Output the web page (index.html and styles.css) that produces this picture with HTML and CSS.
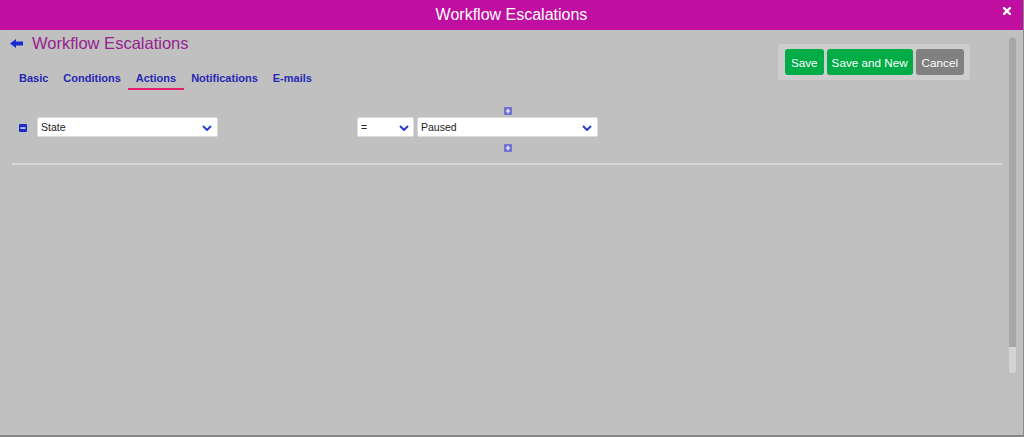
FILE: index.html
```html
<!DOCTYPE html>
<html lang="en">
<head>
<meta charset="utf-8">
<title>Workflow Escalations</title>
<link rel="stylesheet" href="styles.css">
</head>
<body>
<div class="modal">
  <header class="modal-header">
    <h1 class="modal-title">Workflow Escalations</h1>
    <button class="close" aria-label="Close">
      <svg width="8" height="8" viewBox="0 0 8 8"><path d="M1 1L7 7M7 1L1 7" stroke="#fff" stroke-width="2.4" stroke-linecap="square"/></svg>
    </button>
  </header>
  <div class="modal-body">
    <main class="content">
      <div class="top">
        <div class="heading">
          <div class="title-row">
            <svg class="back" width="13" height="9" viewBox="0 0 13 9"><path d="M0 4.5L6 0V2.6H13V6.4H6V9Z" fill="#1b2bd2"/></svg>
            <h2 class="page-title">Workflow Escalations</h2>
          </div>
          <nav class="tabs">
            <a class="tab">Basic</a>
            <a class="tab">Conditions</a>
            <a class="tab active">Actions</a>
            <a class="tab">Notifications</a>
            <a class="tab">E-mails</a>
          </nav>
        </div>
        <div class="actions">
          <button class="btn btn-green">Save</button>
          <button class="btn btn-green btn-wide">Save and New</button>
          <button class="btn btn-gray">Cancel</button>
        </div>
      </div>

      <div class="rule">
        <span class="remove">
          <svg width="8" height="8" viewBox="0 0 8 8"><rect width="8" height="8" rx="1" fill="#1c2cc4"/><rect x="1.5" y="3.4" width="5" height="1.3" fill="#fff"/></svg>
        </span>
        <div class="select field"><span>State</span><svg class="chev" width="10" height="6" viewBox="0 0 10 6"><path d="M1 1L5 5L9 1" fill="none" stroke="#2b3bd1" stroke-width="2"/></svg></div>
        <div class="select op"><span>=</span><svg class="chev" width="10" height="6" viewBox="0 0 10 6"><path d="M1 1L5 5L9 1" fill="none" stroke="#2b3bd1" stroke-width="2"/></svg></div>
        <span class="add add-top">
          <svg width="8" height="8" viewBox="0 0 8 8"><rect width="8" height="8" rx="1" fill="#7070d6"/><path d="M4 1.8V6.2M1.8 4H6.2" stroke="#fff" stroke-width="1.2"/></svg>
        </span>
        <div class="select value"><span>Paused</span><svg class="chev" width="10" height="6" viewBox="0 0 10 6"><path d="M1 1L5 5L9 1" fill="none" stroke="#2b3bd1" stroke-width="2"/></svg></div>
        <span class="add add-bottom">
          <svg width="8" height="8" viewBox="0 0 8 8"><rect width="8" height="8" rx="1" fill="#7070d6"/><path d="M4 1.8V6.2M1.8 4H6.2" stroke="#fff" stroke-width="1.2"/></svg>
        </span>
      </div>

      <hr class="divider">
    </main>
    <div class="scroll-col">
      <div class="scroll-track"><div class="scroll-thumb"></div></div>
    </div>
  </div>
</div>
</body>
</html>
```

FILE: styles.css
```css
* { box-sizing: border-box; }

html, body {
  margin: 0;
  padding: 0;
  background: #c0c0c0;
  font-family: "Liberation Sans", Arial, sans-serif;
}

.modal {
  width: 1024px;
  height: 437px;
  display: flex;
  flex-direction: column;
  background: #c0c0c0;
  border-right: 1px solid #8a8a8a;
  border-bottom: 2px solid #858585;
  overflow: hidden;
}

.modal-header {
  position: relative;
  height: 30px;
  flex: none;
  background: #c00ea1;
  display: flex;
  justify-content: center;
  align-items: center;
}

.modal-title {
  margin: 0;
  font-size: 16px;
  font-weight: normal;
  line-height: 30px;
  color: #fff;
}

.close {
  position: absolute;
  top: 7px;
  right: 12px;
  padding: 0;
  border: 0;
  background: none;
  width: 8px;
  height: 8px;
  display: flex;
}

.modal-body {
  flex: 1;
  display: flex;
  min-height: 0;
}

.content {
  flex: 1;
  padding-left: 10px;
  padding-right: 1px;
}

.top {
  display: flex;
  justify-content: space-between;
  align-items: flex-start;
}

.title-row {
  margin-top: 2px;
  height: 22px;
  display: flex;
  align-items: center;
  gap: 9px;
}

.back { flex: none; margin-top: 1px; }

.page-title {
  margin: 0;
  font-size: 16.5px;
  font-weight: normal;
  line-height: 22px;
  color: #97208f;
}

.tabs {
  display: flex;
  margin-top: 17px;
  margin-left: 1.5px;
}

.tab {
  font-size: 11px;
  font-weight: bold;
  line-height: 15px;
  color: #2727b5;
  padding: 0 7.5px 2px;
  border-bottom: 2px solid transparent;
}

.tab.active { border-bottom-color: #e21d6c; }

.actions {
  margin-top: 14px;
  margin-right: 32px;
  background: #cdcdcd;
  border-radius: 3px;
  padding: 5px 6px 5px 7px;
  display: flex;
  gap: 3px;
}

.btn {
  height: 26px;
  padding: 0 6px;
  border: 0;
  border-radius: 3px;
  font-family: "Liberation Sans", Arial, sans-serif;
  font-size: 11.7px;
  color: #fff;
}

.btn-wide { padding: 0 5px; }

.btn-green { background: #00ac45; }
.btn-gray { background: #808080; }

.rule {
  margin-top: 17px;
  margin-left: 9px;
  display: grid;
  grid-template-columns: 18px 320px 60px 181px;
  grid-template-rows: 10px 20px 15px;
}

.remove {
  grid-column: 1;
  grid-row: 2;
  align-self: center;
  display: flex;
  margin-top: 1px;
}

.select {
  grid-row: 2;
  height: 20px;
  background: #fff;
  border: 1px solid #dcdcdc;
  border-radius: 2px;
  display: flex;
  align-items: center;
  justify-content: space-between;
  padding: 0 5px 0 3px;
  font-size: 10.5px;
  color: #222;
}

.select .chev { flex: none; margin-top: 2px; }

.field { grid-column: 2; width: 181px; }
.op { grid-column: 3; width: 57px; padding-right: 4px; }
.value { grid-column: 4; }

.add {
  grid-column: 4;
  justify-self: center;
  display: flex;
}

.add-top { grid-row: 1; align-self: start; }
.add-bottom { grid-row: 3; align-self: end; }

.divider {
  margin: 11px 0 0 2px;
  height: 2px;
  border: 0;
  background: #d7d7d7;
}

.scroll-col {
  width: 20px;
  flex: none;
  padding-top: 7px;
  padding-left: 6px;
}

.scroll-track {
  width: 7px;
  height: 336px;
  background: #d3d3d3;
  border-radius: 4px;
  overflow: hidden;
}

.scroll-thumb {
  height: 310px;
  background: #a7a7a7;
}
```
